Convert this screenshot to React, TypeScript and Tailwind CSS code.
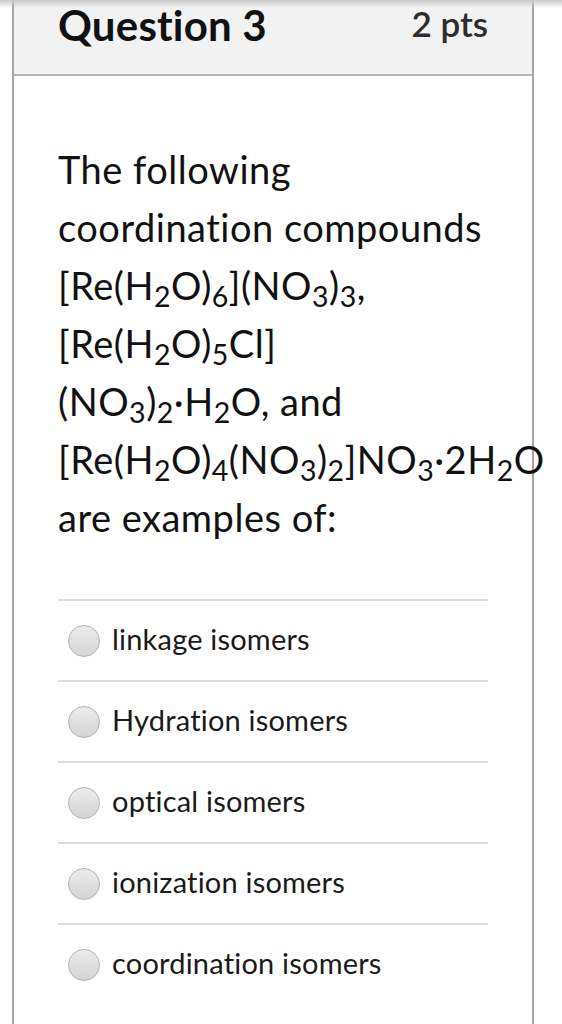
import React from "react";

const answers = [
  "linkage isomers",
  "Hydration isomers",
  "optical isomers",
  "ionization isomers",
  "coordination isomers",
];

function Radio() {
  return (
    <span className="block h-[32px] w-[32px] shrink-0 rounded-full border border-[#b3b3b3] bg-gradient-to-b from-[#ececec] to-[#d4d4d4]" />
  );
}

export default function App() {
  return (
    <div
      className="relative h-[1024px] w-[562px] overflow-hidden bg-white text-[#111] [font-variant-ligatures:none]"
      style={{ fontFamily: "Lato, 'Noto Sans', sans-serif" }}
    >
      <div className="pointer-events-none absolute inset-x-0 top-0 h-[8px] bg-gradient-to-b from-[#c8c8c8] to-transparent" />
      <div className="ml-[12px] min-h-full w-[522px] border-x-2 border-[#a6a6a6]">
        <div className="flex h-[76px] items-start justify-between border-b-2 border-[#b5b5b5] bg-[#f2f2f2] px-[44px]">
          <h2 className="text-[42px] font-bold leading-[50px] tracking-[0.2px]">
            Question 3
          </h2>
          <span className="pt-[1px] text-[35px] font-semibold leading-[44px] text-[#2d2d2d]">
            2 pts
          </span>
        </div>

        <div className="px-[44px] pt-[64px]">
          <p className="whitespace-nowrap text-[38px] leading-[58px] tracking-[0.5px]">
            The following
            <br />
            coordination compounds
            <br />
            [Re(H<sub>2</sub>O)<sub>6</sub>](NO<sub>3</sub>)<sub>3</sub>,
            <br />
            [Re(H<sub>2</sub>O)<sub>5</sub>Cl]
            <br />
            (NO<sub>3</sub>)<sub>2</sub>·H<sub>2</sub>O, and
            <br />
            [Re(H<sub>2</sub>O)<sub>4</sub>(NO<sub>3</sub>)<sub>2</sub>]NO
            <sub>3</sub>·2H<sub>2</sub>O
            <br />
            are examples of:
          </p>

          <ul className="mt-[53px]">
            {answers.map((a) => (
              <li
                key={a}
                className="flex h-[81px] items-center gap-[12px] border-t-2 border-[#dcdcdc] pl-[10px]"
              >
                <Radio />
                <span className="-mt-[3px] text-[29px] leading-[34px] tracking-[0.2px] text-[#1a1a1a]">
                  {a}
                </span>
              </li>
            ))}
          </ul>
        </div>
      </div>
    </div>
  );
}
